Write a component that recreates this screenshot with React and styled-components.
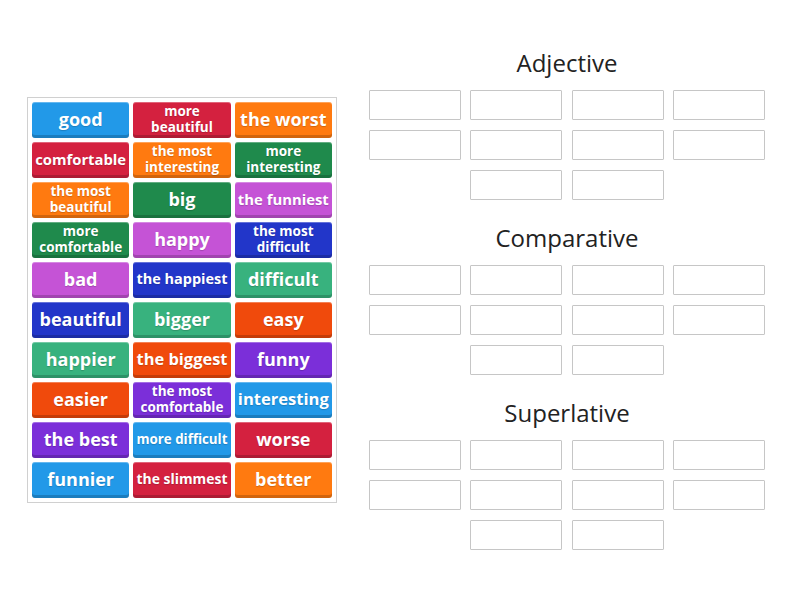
import React, { useMemo } from "react";
import styled, { createGlobalStyle } from "styled-components";

const GlobalStyle = createGlobalStyle`
  html, body {
    margin: 0;
    padding: 0;
    background: #fff;
    font-family: "Open Sans", "Liberation Sans", sans-serif;
  }
`;

const COLORS = {
  blue: "#2299e8",
  red: "#d4213f",
  orange: "#ff7a10",
  green: "#1f8a4c",
  pink: "#c553d6",
  navy: "#2236c9",
  teal: "#38b27e",
  redorange: "#f04a0c",
  violet: "#7b2fd9",
};

const TILES = [
  ["good", "blue"], ["more beautiful", "red"], ["the worst", "orange"],
  ["comfortable", "red"], ["the most interesting", "orange"], ["more interesting", "green"],
  ["the most beautiful", "orange"], ["big", "green"], ["the funniest", "pink"],
  ["more comfortable", "green"], ["happy", "pink"], ["the most difficult", "navy"],
  ["bad", "pink"], ["the happiest", "navy"], ["difficult", "teal"],
  ["beautiful", "navy"], ["bigger", "teal"], ["easy", "redorange"],
  ["happier", "teal"], ["the biggest", "redorange"], ["funny", "violet"],
  ["easier", "redorange"], ["the most comfortable", "violet"], ["interesting", "blue"],
  ["the best", "violet"], ["more difficult", "blue"], ["worse", "red"],
  ["funnier", "blue"], ["the slimmest", "red"], ["better", "orange"],
];

const GROUPS = ["Adjective", "Comparative", "Superlative"];

const Page = styled.div`
  display: flex;
  align-items: flex-start;
  width: 800px;
  height: 600px;
  padding-left: 27px;
  box-sizing: border-box;
`;

const Bank = styled.div`
  margin-top: 97px;
  border: 1px solid #d0d0d0;
  padding: 4px;
  display: grid;
  grid-template-columns: repeat(3, 97.33px);
  grid-auto-rows: 36px;
  gap: 4px;
  background: #fff;
`;

const TileBox = styled.div`
  display: flex;
  align-items: center;
  justify-content: center;
  text-align: center;
  padding: 0 3px 2px;
  box-sizing: border-box;
  border-radius: 3px;
  color: #fff;
  font-weight: 700;
  text-shadow: 0 1px 1px rgba(0, 0, 0, 0.18);
  background: ${({ $color }) => $color};
  box-shadow: inset 0 1px 0 rgba(255, 255, 255, 0.3),
    inset 0 -3px 0 rgba(0, 0, 0, 0.18);
  white-space: ${({ $wrap }) => ($wrap ? "normal" : "nowrap")};
  line-height: ${({ $wrap }) => ($wrap ? "16px" : "20px")};
  overflow: hidden;
`;

const Board = styled.div`
  margin-left: 32px;
  padding-top: 48px;
  width: 396px;
  display: flex;
  flex-direction: column;
  gap: 23px;
`;

const Group = styled.section`
  display: flex;
  flex-direction: column;
  align-items: center;
`;

const Heading = styled.h2`
  margin: 0 0 12px;
  height: 30px;
  line-height: 30px;
  font-size: 24px;
  font-weight: 400;
  color: #222;
`;

const Slots = styled.div`
  width: 396px;
  display: flex;
  flex-wrap: wrap;
  justify-content: center;
  gap: 10px 9.33px;
`;

const Slot = styled.div`
  width: 92px;
  height: 30px;
  box-sizing: border-box;
  border: 1px solid #c6c6c6;
  border-radius: 1px;
  background: #fff;
`;

let ctx;
function measure(text, size) {
  if (!ctx) ctx = document.createElement("canvas").getContext("2d");
  ctx.font = `700 ${size}px "Open Sans"`;
  return ctx.measureText(text).width;
}

function Tile({ text, color }) {
  const fit = useMemo(() => {
    const w = measure(text, 18);
    const size = Math.min(18, (18 * 91) / w);
    if (size >= 13) return { size, wrap: false };
    return { size: 13.5, wrap: true };
  }, [text]);
  return (
    <TileBox $color={COLORS[color]} $wrap={fit.wrap} style={{ fontSize: fit.size }}>
      {text}
    </TileBox>
  );
}

export default function App() {
  return (
    <>
      <GlobalStyle />
      <Page>
        <Bank>
          {TILES.map(([t, c]) => (
            <Tile key={t} text={t} color={c} />
          ))}
        </Bank>
        <Board>
          {GROUPS.map((g) => (
            <Group key={g}>
              <Heading>{g}</Heading>
              <Slots>
                {Array.from({ length: 10 }, (_, i) => (
                  <Slot key={i} />
                ))}
              </Slots>
            </Group>
          ))}
        </Board>
      </Page>
    </>
  );
}
